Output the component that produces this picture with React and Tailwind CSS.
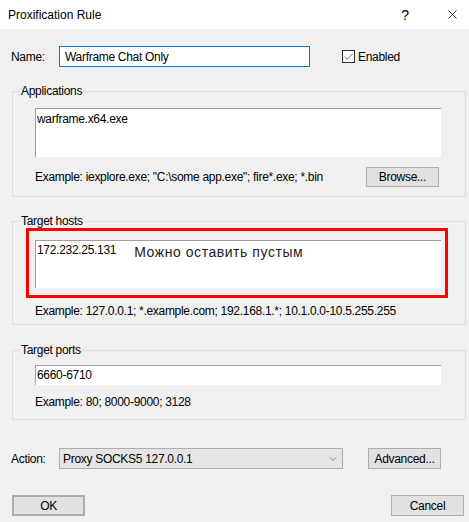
import { Check, ChevronDown, X } from "lucide-react"

const font = { fontFamily: '"Liberation Sans", Arial, sans-serif' }

const Button = ({ children, className = "" }) => (
  <div
    className={`flex items-center justify-center bg-[#e1e1e1] border border-[#adadad] text-[12px] tracking-[-0.3px] text-black ${className}`}
  >
    {children}
  </div>
)

const TextBox = ({ children, className = "" }) => (
  <div className={`bg-white border-t border-l border-[#a0a0a0] pl-[1px] text-[12px] leading-[15px] tracking-[-0.3px] text-black ${className}`}>
    {children}
  </div>
)

const Group = ({ title, className = "", children }) => (
  <div className={`relative ml-[12px] w-[454px] border border-[#dcdcdc] ${className}`}>
    <span className="absolute left-[7px] top-[-8px] bg-[#f0f0f0] px-[1px] text-[12px] leading-[15px] tracking-[-0.3px] text-black">
      {title}
    </span>
    {children}
  </div>
)

export default function App() {
  return (
    <div className="w-[469px] h-[522px] bg-[#f0f0f0] overflow-hidden text-black" style={font}>
      {/* Title bar */}
      <div className="h-[29px] bg-white flex items-center pl-[8px]">
        <span className="text-[12px]">Proxification Rule</span>
        <span className="ml-auto mr-[36px] text-[14px] leading-none">?</span>
        <X className="mr-[9px] h-[15px] w-[15px]" strokeWidth={1.2} />
      </div>

      {/* Name row */}
      <div className="flex items-center mt-[17px] pl-[11px] h-[21px] text-[12px] tracking-[-0.3px]">
        <span className="w-[48px]">Name:</span>
        <div className="w-[251px] h-[21px] bg-white border border-[#0078d7] flex items-center pl-[5px]">
          Warframe Chat Only
        </div>
        <div className="ml-[32px] w-[13px] h-[13px] border border-[#333333] bg-white flex items-center justify-center">
          <Check className="h-[12px] w-[12px] text-[#333333]" strokeWidth={1.6} />
        </div>
        <span className="ml-[3px]">Enabled</span>
      </div>

      {/* Applications */}
      <Group title="Applications" className="mt-[24px] h-[106px]">
        <div className="pt-[16px] pl-[22px]">
          <TextBox className="w-[406px] h-[49px] pt-[3px]">warframe.x64.exe</TextBox>
          <div className="mt-[10px] flex items-center w-[404px]">
            <span className="text-[12px] tracking-[-0.3px]">Example: iexplore.exe; "C:\some app.exe"; fire*.exe; *.bin</span>
            <Button className="ml-auto w-[73px] h-[20px]">Browse...</Button>
          </div>
        </div>
      </Group>

      {/* Target hosts */}
      <Group title="Target hosts" className="mt-[24px] h-[104px]">
        <div className="absolute left-[13px] top-[6px] w-[422px] h-[70px] border-[3px] border-[#ff0000]" />
        <div className="pt-[18px] pl-[22px]">
          <TextBox className="w-[406px] h-[48px] pt-[2px] flex items-start">
            <span>172.232.25.131</span>
            <span className="ml-[18px] text-[14px] leading-[18px] tracking-[0.55px] text-[#222222]">Можно оставить пустым</span>
          </TextBox>
          <div className="mt-[16px] text-[12px] leading-[15px] tracking-[-0.3px]">
            Example: 127.0.0.1; *.example.com; 192.168.1.*; 10.1.0.0-10.5.255.255
          </div>
        </div>
      </Group>

      {/* Target ports */}
      <Group title="Target ports" className="mt-[25px] h-[70px]">
        <div className="pt-[14px] pl-[22px]">
          <TextBox className="w-[406px] h-[20px] pt-[2px]">6660-6710</TextBox>
          <div className="mt-[10px] text-[12px] leading-[15px] tracking-[-0.3px]">Example: 80; 8000-9000; 3128</div>
        </div>
      </Group>

      {/* Action row */}
      <div className="flex items-center mt-[28px] pl-[11px] text-[12px] tracking-[-0.3px]">
        <span className="w-[48px]">Action:</span>
        <div className="w-[284px] h-[21px] bg-[#e5e5e5] border border-[#adadad] flex items-center pl-[3px] pr-[3px]">
          <span>Proxy SOCKS5 127.0.0.1</span>
          <ChevronDown className="ml-auto h-[12px] w-[12px] text-[#555555]" strokeWidth={1.2} />
        </div>
        <Button className="ml-[25px] w-[73px] h-[21px]">Advanced...</Button>
      </div>

      {/* OK / Cancel */}
      <div className="flex items-center mt-[26px] pl-[12px] pr-[5px]">
        <Button className="w-[73px] h-[21px] border-2 border-[#0078d7]">OK</Button>
        <Button className="ml-auto w-[73px] h-[21px]">Cancel</Button>
      </div>
    </div>
  )
}
